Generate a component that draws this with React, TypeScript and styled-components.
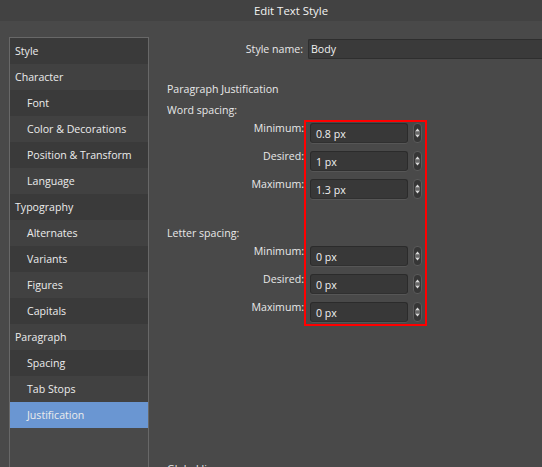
import React from 'react';
import styled, { createGlobalStyle } from 'styled-components';

const GlobalStyle = createGlobalStyle`
  html, body {
    margin: 0;
    padding: 0;
    background: #494949;
    overflow: hidden;
  }
  body {
    font-family: "Open Sans", "Noto Sans", sans-serif;
    font-size: 10.6px;
    color: #e8e8e8;
  }
`;

const Window = styled.div`
  width: 542px;
  height: 467px;
  display: flex;
  flex-direction: column;
  background: #494949;
  overflow: hidden;
`;

const TitleBar = styled.div`
  height: 21px;
  flex: none;
  background: #424242;
  display: flex;
  align-items: center;
  justify-content: center;
  padding-left: 40px;
  font-size: 11.4px;
  color: #f2f2f2;
`;

const Body = styled.div`
  flex: 1;
  display: flex;
  padding: 16px 0 0 9px;
  min-height: 0;
`;

const Sidebar = styled.ul`
  list-style: none;
  margin: 0;
  padding: 0;
  width: 138px;
  flex: none;
  border: 1px solid #686868;
  border-bottom: none;
  background: #494949;
`;

const NavItem = styled.li<{ $sub?: boolean; $active?: boolean; $shade: number }>`
  height: 26px;
  display: flex;
  align-items: center;
  padding-left: ${p => (p.$sub ? 17 : 5)}px;
  background: ${p => (p.$active ? '#6a96d2' : p.$shade ? '#414141' : '#3a3a3a')};
  color: #ececec;
  white-space: nowrap;
`;

const Content = styled.div`
  flex: 1;
  display: flex;
  flex-direction: column;
  padding-left: 18px;
  min-width: 0;
`;

const NameRow = styled.div`
  display: flex;
  align-items: center;
  height: 22px;
  margin-top: 1px;
  gap: 5px;
`;

const RowLabel = styled.span`
  width: 136px;
  flex: none;
  text-align: right;
  white-space: nowrap;
`;

const NameInput = styled.div`
  flex: 1;
  height: 20px;
  box-sizing: border-box;
  background: #3a3a3a;
  border: 1px solid #2e2e2e;
  border-right: none;
  border-radius: 2px 0 0 2px;
  display: flex;
  align-items: center;
  padding-left: 2px;
  color: #f0f0f0;
`;

const Heading = styled.div<{ $top: number }>`
  margin-top: ${p => p.$top}px;
  height: 20px;
  display: flex;
  align-items: center;
  white-space: nowrap;
`;

const Fields = styled.div`
  display: flex;
  flex-direction: column;
  gap: 8px;
  margin-top: 3px;
`;

const FieldRow = styled.div`
  display: flex;
  align-items: flex-start;
  height: 20px;
`;

const FieldLabel = styled.span`
  width: 137px;
  flex: none;
  text-align: right;
  margin-top: -2px;
  white-space: nowrap;
`;

const NumInput = styled.div`
  margin-left: 6px;
  width: 98px;
  height: 20px;
  box-sizing: border-box;
  background: #383838;
  border: 1px solid #2b2b2b;
  border-bottom-color: #303030;
  border-radius: 3px;
  box-shadow: 0 1px 0 #565656;
  display: flex;
  align-items: center;
  padding-left: 5px;
  padding-top: 2px;
  color: #f0f0f0;
`;

const Spinner = styled.div`
  margin-left: 5px;
  width: 9px;
  height: 20px;
  box-sizing: border-box;
  background: #363636;
  border: 1px solid #5a5a5a;
  border-radius: 4px;
  display: flex;
  align-items: center;
  justify-content: center;
`;

const Highlight = styled.div`
  position: absolute;
  left: 304px;
  top: 120px;
  width: 123px;
  height: 206px;
  box-sizing: border-box;
  border: 2px solid #ff0000;
  pointer-events: none;
`;

const Frame = styled.div`
  position: relative;
`;

const Footer = styled.div`
  margin-top: auto;
  height: 6px;
  overflow: hidden;
  white-space: nowrap;
  line-height: 16px;
`;

const nav = [
  { label: 'Style' },
  { label: 'Character' },
  { label: 'Font', sub: true },
  { label: 'Color & Decorations', sub: true },
  { label: 'Position & Transform', sub: true },
  { label: 'Language', sub: true },
  { label: 'Typography' },
  { label: 'Alternates', sub: true },
  { label: 'Variants', sub: true },
  { label: 'Figures', sub: true },
  { label: 'Capitals', sub: true },
  { label: 'Paragraph' },
  { label: 'Spacing', sub: true },
  { label: 'Tab Stops', sub: true },
  { label: 'Justification', sub: true, active: true },
];

const SpinIcon = () => (
  <svg width="7" height="12" viewBox="0 0 7 12">
    <path d="M3.5 1.5 L6 4.5 H1 Z" fill="#d8d8d8" />
    <rect x="1" y="5.5" width="5" height="1" fill="#9a9a9a" />
    <path d="M3.5 10.5 L6 7.5 H1 Z" fill="#d8d8d8" />
  </svg>
);

const Field = ({ label, value }: { label: string; value: string }) => (
  <FieldRow>
    <FieldLabel>{label}</FieldLabel>
    <NumInput>{value}</NumInput>
    <Spinner>
      <SpinIcon />
    </Spinner>
  </FieldRow>
);

export default function App() {
  return (
    <Frame>
      <GlobalStyle />
      <Window>
        <TitleBar>Edit Text Style</TitleBar>
        <Body>
          <Sidebar>
            {nav.map((n, i) => (
              <NavItem key={n.label} $sub={n.sub} $active={n.active} $shade={i % 2}>
                {n.label}
              </NavItem>
            ))}
          </Sidebar>
          <Content>
            <NameRow>
              <RowLabel>Style name:</RowLabel>
              <NameInput>Body</NameInput>
            </NameRow>
            <Heading $top={19}>Paragraph Justification</Heading>
            <Heading $top={1}>Word spacing:</Heading>
            <Fields>
              <Field label="Minimum:" value="0.8 px" />
              <Field label="Desired:" value="1 px" />
              <Field label="Maximum:" value="1.3 px" />
            </Fields>
            <Heading $top={24}>Letter spacing:</Heading>
            <Fields>
              <Field label="Minimum:" value="0 px" />
              <Field label="Desired:" value="0 px" />
              <Field label="Maximum:" value="0 px" />
            </Fields>
            <Footer>Global li</Footer>
          </Content>
        </Body>
      </Window>
      <Highlight />
    </Frame>
  );
}
